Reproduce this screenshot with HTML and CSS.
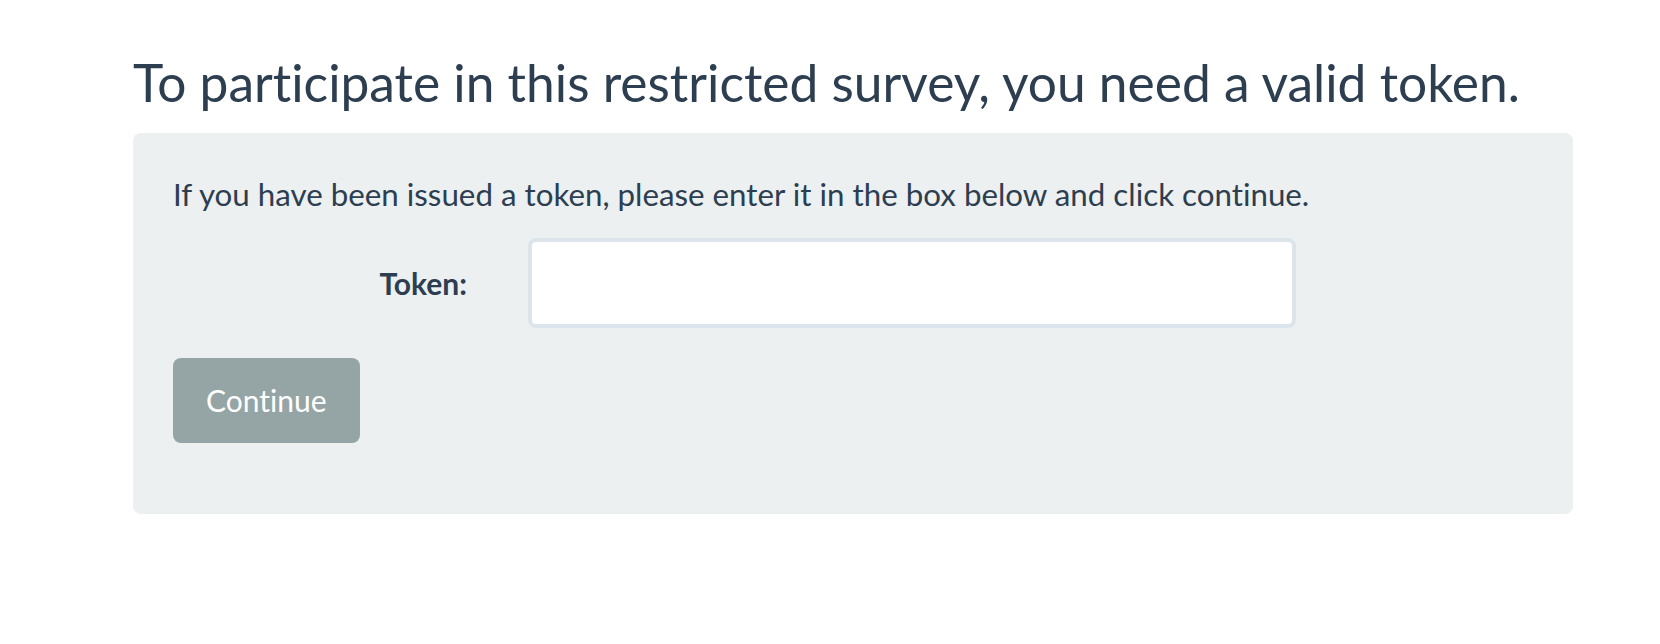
FILE: index.html
```html
<!DOCTYPE html>
<html lang="en">
<head>
<meta charset="utf-8">
<title>Restricted survey</title>
<link rel="stylesheet" href="styles.css">
</head>
<body>
<main class="page">
  <h1 class="title">To participate in this restricted survey, you need a valid token.</h1>
  <form class="well">
    <p class="intro">If you have been issued a token, please enter it in the box below and click continue.</p>
    <div class="field-row">
      <label class="field-label" for="token">Token:</label>
      <input class="field-input" id="token" type="text">
    </div>
    <button class="btn" type="button">Continue</button>
  </form>
</main>
</body>
</html>
```
FILE: styles.css
```css
html, body {
  margin: 0;
  padding: 0;
  background: #ffffff;
}
body {
  font-family: Lato, "Open Sans", sans-serif;
  color: #2c3e50;
  font-variant-ligatures: none;
}
.page {
  padding: 54px 0 0 133px;
}
.title {
  margin: 0 0 22px;
  font-size: 51.5px;
  font-weight: 400;
  line-height: 1.1;
  letter-spacing: 0;
}
.well {
  box-sizing: border-box;
  width: 1440px;
  background: #ecf0f1;
  border-radius: 8px;
  padding: 40px 40px 71px;
  display: flex;
  flex-direction: column;
  align-items: flex-start;
}
.intro {
  margin: 0 0 22px;
  font-size: 31.3px;
  line-height: 43px;
}
.field-row {
  display: grid;
  grid-template-columns: 294px 768px;
  column-gap: 61px;
  align-items: center;
  margin-bottom: 30px;
}
.field-label {
  text-align: right;
  font-size: 30px;
  font-weight: 700;
}
.field-input {
  box-sizing: border-box;
  height: 90px;
  width: 768px;
  background: #ffffff;
  border: 4px solid #dce4ec;
  border-radius: 8px;
  padding: 0 28px;
  font: 30px Lato, sans-serif;
  outline: none;
}
.btn {
  height: 85px;
  padding: 0 33px;
  background: #95a5a6;
  border: none;
  border-radius: 8px;
  color: #ffffff;
  font: 30px Lato, sans-serif;
  font-variant-ligatures: none;
}
```
